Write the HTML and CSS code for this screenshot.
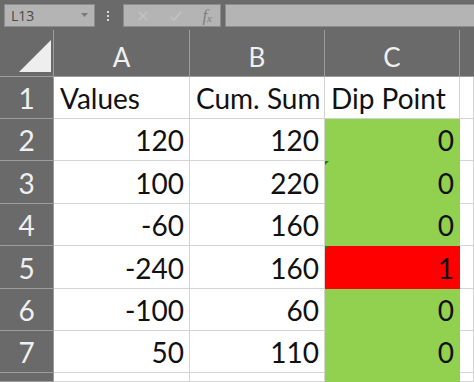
FILE: index.html
```html
<!DOCTYPE html>
<html>
<head>
<meta charset="utf-8">
<link rel="stylesheet" href="styles.css">
</head>
<body>
<div class="app">
  <div class="toolbar">
    <div class="namebox">
      <span class="ref">L13</span>
      <svg class="caret" width="7" height="4" viewBox="0 0 7 4"><path d="M0 0H7L3.5 4Z" fill="#7a7a7a"/></svg>
    </div>
    <div class="grip"><i></i><i></i><i></i></div>
    <div class="buttons">
      <svg class="btn" width="12" height="12" viewBox="0 0 12 12"><path d="M2 2L10 10M10 2L2 10" stroke="#c4c4c4" stroke-width="1.4" fill="none"/></svg>
      <svg class="btn" width="14" height="12" viewBox="0 0 14 12"><path d="M1.5 6.5L5 10L12.5 1.5" stroke="#c4c4c4" stroke-width="1.4" fill="none"/></svg>
      <span class="fx"><i>f</i><sub>x</sub></span>
    </div>
    <div class="formula"></div>
  </div>
  <div class="sheet">
    <div class="corner"><span class="tri"></span></div>
    <div class="colhead">A</div>
    <div class="colhead">B</div>
    <div class="colhead">C</div>
    <div class="colhead last"></div>

    <div class="rowhead">1</div>
    <div class="cell">Values</div>
    <div class="cell">Cum. Sum</div>
    <div class="cell">Dip Point</div>
    <div class="cell"></div>

    <div class="rowhead">2</div>
    <div class="cell num">120</div>
    <div class="cell num">120</div>
    <div class="cell num green">0</div>
    <div class="cell"></div>

    <div class="rowhead">3</div>
    <div class="cell num">100</div>
    <div class="cell num">220</div>
    <div class="cell num green flag">0</div>
    <div class="cell"></div>

    <div class="rowhead">4</div>
    <div class="cell num">-60</div>
    <div class="cell num">160</div>
    <div class="cell num green">0</div>
    <div class="cell"></div>

    <div class="rowhead">5</div>
    <div class="cell num">-240</div>
    <div class="cell num">160</div>
    <div class="cell num red flag">1</div>
    <div class="cell"></div>

    <div class="rowhead">6</div>
    <div class="cell num">-100</div>
    <div class="cell num">60</div>
    <div class="cell num green">0</div>
    <div class="cell"></div>

    <div class="rowhead">7</div>
    <div class="cell num">50</div>
    <div class="cell num">110</div>
    <div class="cell num green">0</div>
    <div class="cell"></div>

    <div class="rowhead"></div>
    <div class="cell"></div>
    <div class="cell"></div>
    <div class="cell green"></div>
    <div class="cell"></div>
  </div>
</div>
</body>
</html>
```

FILE: styles.css
```css
* { box-sizing: border-box; }
html, body { margin: 0; padding: 0; }
body {
  width: 474px;
  height: 382px;
  overflow: hidden;
  background: #ffffff;
  font-family: Lato, "Open Sans", sans-serif;
}
.app {
  display: flex;
  flex-direction: column;
  height: 382px;
}
.toolbar {
  height: 30px;
  background: #6a6a6a;
  display: flex;
  align-items: flex-start;
  padding: 4px 0 0 4px;
}
.namebox {
  width: 91px;
  height: 23px;
  background: #b4b4b4;
  border: 1px solid #8c8c8c;
  display: flex;
  align-items: center;
  justify-content: space-between;
  padding: 0 6px 0 6px;
  font-family: "Open Sans", sans-serif;
  font-size: 14px;
  color: #4a4a4a;
}
.caret { margin-top: -2px; }
.grip {
  width: 28px;
  height: 23px;
  display: flex;
  flex-direction: column;
  align-items: center;
  justify-content: center;
  gap: 2px;
  padding-right: 2px;
}
.grip i {
  display: block;
  width: 2px;
  height: 2px;
  background: #d8d8d8;
}
.buttons {
  width: 98px;
  height: 23px;
  background: #b4b4b4;
  border: 1px solid #8c8c8c;
  display: flex;
  align-items: center;
  justify-content: space-between;
  padding: 0 8px 0 13px;
}
.fx {
  font-family: "Liberation Serif", serif;
  color: #7e7e7e;
  font-size: 17px;
  line-height: 1;
}
.fx sub { font-size: 11px; vertical-align: -1px; font-style: italic; }
.formula {
  margin-left: 4px;
  flex: 1;
  height: 23px;
  background: #b4b4b4;
  border: 1px solid #8c8c8c;
  border-right: none;
}
.sheet {
  flex: 1;
  display: grid;
  grid-template-columns: 54px 136px 135px 135px 1fr;
  grid-template-rows: 47px 42px 42px 43px 42px 43px 42px 42px 1fr;
  background: #ffffff;
}
.corner, .colhead, .rowhead {
  background: #6a6a6a;
  color: #f0f0f0;
  font-size: 26px;
}
.corner {
  border-right: 1px solid #9c9c9c;
  border-bottom: 1px solid #9c9c9c;
  display: flex;
  align-items: flex-end;
  justify-content: flex-end;
  padding: 0 2px 4px 0;
}
.tri {
  width: 0;
  height: 0;
  border-left: 32px solid transparent;
  border-bottom: 32px solid #eeeeee;
}
.colhead {
  border-right: 1px solid #9c9c9c;
  border-bottom: 1px solid #9c9c9c;
  display: flex;
  align-items: center;
  justify-content: center;
  padding-top: 8px;
}
.colhead.last { border-right: none; }
.rowhead {
  border-right: 1px solid #9c9c9c;
  border-bottom: 1px solid #9c9c9c;
  display: flex;
  align-items: flex-end;
  justify-content: center;
  padding-bottom: 3px;
  font-size: 28px;
}
.cell {
  position: relative;
  border-right: 1px solid #d4d4d4;
  border-bottom: 1px solid #d4d4d4;
  display: flex;
  align-items: flex-end;
  padding: 0 5px 3px 6px;
  font-size: 28px;
  line-height: 34px;
  color: #111111;
  white-space: nowrap;
}
.rowhead { line-height: 34px; }
.cell.num { justify-content: flex-end; }
.green { background: #92d050; border-right-color: #92d050; border-bottom-color: #92d050; }
.red { background: #ff0000; border-right-color: #ff0000; border-bottom-color: #ff0000; }
.flag::before {
  content: "";
  position: absolute;
  left: 0;
  top: 0;
  border-top: 4px solid #1e7b1e;
  border-right: 4px solid transparent;
}
```
